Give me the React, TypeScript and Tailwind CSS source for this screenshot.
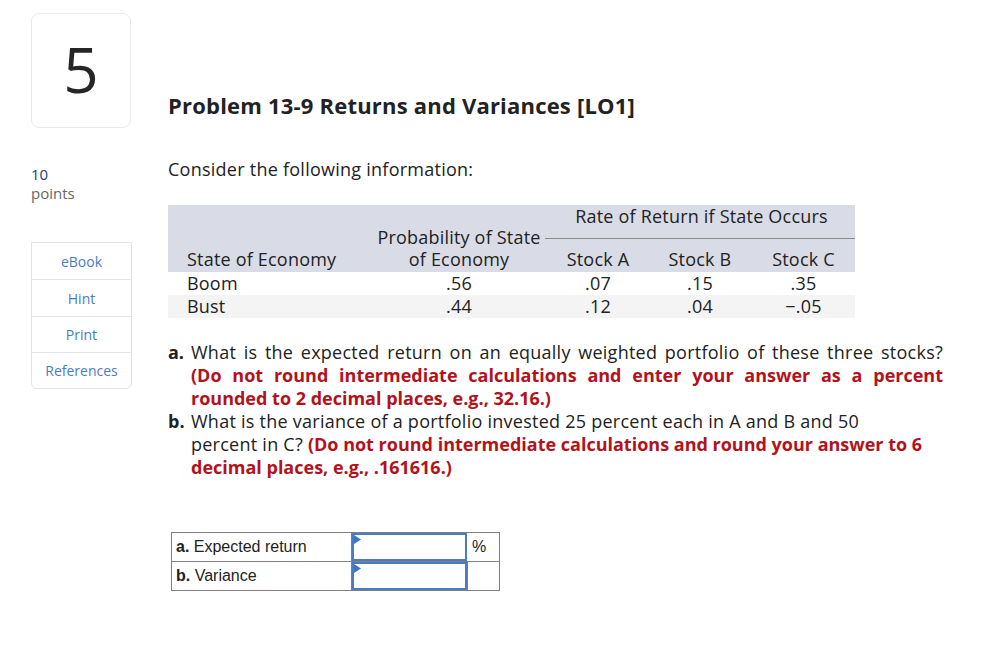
import React from "react";

const F = { fontFamily: "'Open Sans', Lato, sans-serif" };

function Tri() {
  return (
    <svg className="absolute left-0 top-0" width="8" height="10" viewBox="0 0 8 10">
      <path d="M0 0 L7 4.5 L0 9 Z" fill="#3a77c8" />
    </svg>
  );
}

const COLS = "grid grid-cols-[202px_178px_100px_104px_103px]";

export default function App() {
  return (
    <div className="w-[1000px] h-[656px] bg-white text-[#222] flex" style={F}>
      {/* left column */}
      <div className="ml-[31px] w-[101px] flex flex-col">
        <div className="mt-[13px] h-[115px] w-[100px] rounded-[8px] border border-[#e9e9e9] flex items-center justify-center">
          <span className="text-[62px] leading-none text-[#262626] pb-[4px]">5</span>
        </div>
        <div className="mt-[37px] text-[15px] leading-[18px] text-[#1d3f6e]">10</div>
        <div className="text-[15px] leading-[20px] text-[#666]">points</div>
        <div className="mt-[39px] w-[101px] border border-[#e3e3e3] rounded-b-[6px] text-[14px] text-[#4a7cc4] text-center">
          <div className="h-[37px] flex items-center justify-center border-b border-[#e3e3e3]">eBook</div>
          <div className="h-[37px] flex items-center justify-center border-b border-[#e3e3e3]">Hint</div>
          <div className="h-[36px] flex items-center justify-center border-b border-[#e3e3e3]">Print</div>
          <div className="h-[35px] flex items-center justify-center">References</div>
        </div>
      </div>

      {/* main column */}
      <div className="ml-[36px] w-[790px] flex flex-col">
        <h1 className="mt-[90px] text-[22px] leading-[30px] font-bold tracking-[0.2px] text-[#222]">
          Problem 13-9 Returns and Variances [LO1]
        </h1>
        <p className="mt-[38px] text-[18px] leading-[22px] tracking-[0.25px]">Consider the following information:</p>

        {/* data table */}
        <div className="mt-[25px] w-[687px] text-[18px] tracking-[0.2px] text-[#222]">
          <div className={"bg-[#d9dce6] h-[67px] " + COLS}>
            <div className="row-start-1 col-start-1 row-span-2 pl-[19px] flex items-end pb-[2px] leading-[22px]">State of Economy</div>
            <div className="row-start-1 col-start-2 row-span-2 flex flex-col items-center justify-end pb-[2px] leading-[22px]">
              <div>Probability of State</div>
              <div>of Economy</div>
            </div>
            <div className="col-start-3 col-span-3 row-start-1 relative flex justify-center h-[34px] leading-[22px] items-start">
              Rate of Return if State Occurs
              <div className="absolute left-[-3px] right-0 bottom-0 border-b border-[#8a8a8a]"></div>
            </div>
            <div className="col-start-3 row-start-2 flex items-end justify-center pb-[2px] leading-[22px]">Stock A</div>
            <div className="col-start-4 row-start-2 flex items-end justify-center pb-[2px] leading-[22px]">Stock B</div>
            <div className="col-start-5 row-start-2 flex items-end justify-center pb-[2px] leading-[22px]">Stock C</div>
          </div>
          <div className={"h-[23px] leading-[23px] bg-white " + COLS}>
            <div className="pl-[19px]">Boom</div>
            <div className="text-center">.56</div>
            <div className="text-center">.07</div>
            <div className="text-center">.15</div>
            <div className="text-center">.35</div>
          </div>
          <div className={"h-[23px] leading-[23px] bg-[#f4f4f4] " + COLS}>
            <div className="pl-[19px]">Bust</div>
            <div className="text-center">.44</div>
            <div className="text-center">.12</div>
            <div className="text-center">.04</div>
            <div className="text-center">&minus;.05</div>
          </div>
        </div>

        {/* questions */}
        <div className="mt-[23px] w-[775px] text-[18px] leading-[23px]">
          <div className="flex">
            <span className="w-[23px] shrink-0 font-bold">a.</span>
            <p className="text-justify w-[752px] tracking-[0.25px]">
              What is the expected return on an equally weighted portfolio of these three stocks?{" "}
              <span className="font-bold text-[#b3121b] tracking-[0px]">
                (Do not round intermediate calculations and enter your answer as a percent rounded to 2 decimal places, e.g., 32.16.)
              </span>
            </p>
          </div>
          <div className="flex">
            <span className="w-[23px] shrink-0 font-bold">b.</span>
            <p className="w-[736px] tracking-[0.25px]">
              What is the variance of a portfolio invested 25 percent each in A and B and 50 percent in C?{" "}
              <span className="font-bold text-[#b3121b] tracking-[0px]">
                (Do not round intermediate calculations and round your answer to 6 decimal places, e.g., .161616.)
              </span>
            </p>
          </div>
        </div>

        {/* answer table */}
        <div
          className="mt-[53px] ml-[3px] w-[329px] border border-[#808080] text-[16px] text-[#222]"
          style={{ fontFamily: "'Liberation Sans', Arial, sans-serif" }}
        >
          <div className="flex h-[29px] border-b border-[#808080]">
            <div className="w-[180px] border-r border-[#808080] flex items-center pl-[4px]">
              <b>a.</b>&nbsp;Expected return
            </div>
            <div className="relative w-[115px] border-2 border-[#4a7cc0]">
              <Tri />
            </div>
            <div className="flex-1 flex items-center pl-[5px]">%</div>
          </div>
          <div className="flex h-[28px]">
            <div className="w-[180px] border-r border-[#808080] flex items-center pl-[4px]">
              <b>b.</b>&nbsp;Variance
            </div>
            <div className="relative w-[115px] border-2 border-[#4a7cc0]">
              <Tri />
            </div>
            <div className="flex-1 border-l border-[#808080]"></div>
          </div>
        </div>
      </div>
    </div>
  );
}
